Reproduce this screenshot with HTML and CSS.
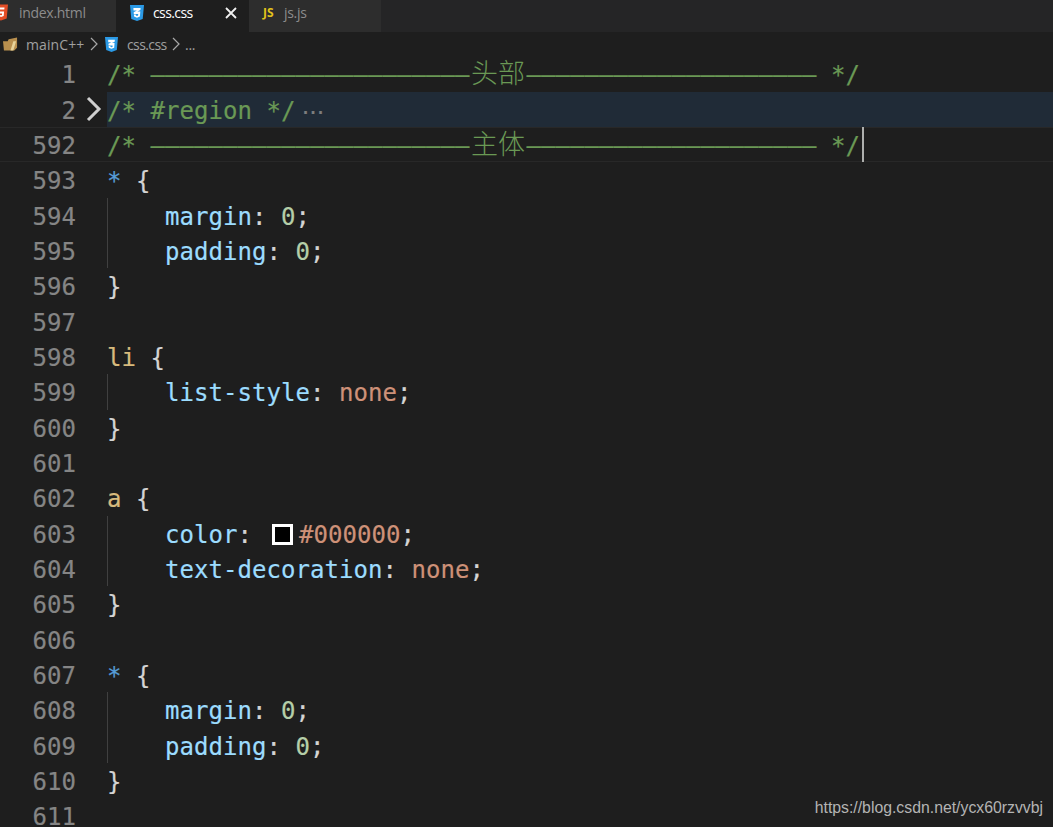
FILE: index.html
```html
<!DOCTYPE html>
<html lang="zh">
<head>
<meta charset="utf-8">
<title>css.css</title>
<link rel="stylesheet" href="styles.css">
</head>
<body>
<div class="window">
  <div class="tabs">
    <div class="tab tab-html">
      <svg class="icon-html" viewBox="0 0 14 16"><path fill="#e44d26" d="M0 0h14l-1.3 14L7 16l-5.7-2z"/><path fill="#fff" d="M3.5 3h7l-.2 2H5.700l.1 2h4.300l-.4 4.500L7 12.400l-2.700-.9-.2-2h1.800l.1 1 1 .3 1-.3.100-1.500H3.900z"/></svg>
      <span class="tab-label">index.html</span>
    </div>
    <div class="tab tab-active">
      <svg class="icon-css" viewBox="0 0 14 16"><path fill="#2b9ae6" d="M0 0h14l-1.300 14L7 16l-5.700-2z"/><path fill="#fff" d="M3.400 3h7.200l-.2 2-3 1.500h2.900l-.4 5L7 12.700l-2.900-1.100-.2-2h1.900l.1 1 1.100.4 1.100-.4.100-1.600H3.800l-.1-1.800 3.200-1.700H3.500z"/></svg>
      <span class="tab-label tab-label-active">css.css</span>
      <svg class="icon-close" viewBox="0 0 12 12"><path d="M1 1l10 10M11 1L1 11"/></svg>
    </div>
    <div class="tab tab-js">
      <span class="js-badge">JS</span>
      <span class="tab-label">js.js</span>
    </div>
  </div>
  <div class="crumbs">
    <svg class="icon-folder" viewBox="0 0 16 15"><path fill="#b88f4e" d="M0 4h5l1-2 9-2v11l-3 3H1z"/><path fill="#e8d39a" d="M8 14l3-10h3l-3 10z"/></svg>
    <span class="crumb-text crumb-root">mainC++</span>
    <svg class="icon-sep" viewBox="0 0 8 14"><path d="M1 1l6 6-6 6"/></svg>
    <svg class="icon-css-small" viewBox="0 0 14 16"><path fill="#2b9ae6" d="M0 0h14l-1.300 14L7 16l-5.700-2z"/><path fill="#fff" d="M3.400 3h7.200l-.2 2-3 1.500h2.900l-.4 5L7 12.700l-2.900-1.100-.2-2h1.900l.1 1 1.100.4 1.100-.4.100-1.600H3.800l-.1-1.800 3.200-1.700H3.500z"/></svg>
    <span class="crumb-text crumb-file">css.css</span>
    <svg class="icon-sep" viewBox="0 0 8 14"><path d="M1 1l6 6-6 6"/></svg>
    <span class="crumb-text crumb-more">...</span>
  </div>
  <div class="editor">
    <div class="line"><span class="num">1</span><span class="fold"></span><span class="code c-com">/* ——————————————————————<span class="cjk">头部</span>———————————————————— */</span></div>
    <div class="line"><span class="num">2</span><span class="fold"><svg class="icon-fold" viewBox="0 0 16 26"><path d="M2 2l11 11L2 24"/></svg></span><span class="code code-folded c-com">/* #region */<span class="dots">···</span></span></div>
    <div class="line line-current"><span class="num">592</span><span class="fold"></span><span class="code c-com">/* ——————————————————————<span class="cjk">主体</span>———————————————————— */<span class="caret"></span></span></div>
    <div class="line"><span class="num">593</span><span class="fold"></span><span class="code"><span class="c-sel">*</span> {</span></div>
    <div class="line"><span class="num">594</span><span class="fold"></span><span class="code guide">    <span class="c-prop">margin</span>: <span class="c-num">0</span>;</span></div>
    <div class="line"><span class="num">595</span><span class="fold"></span><span class="code guide">    <span class="c-prop">padding</span>: <span class="c-num">0</span>;</span></div>
    <div class="line"><span class="num">596</span><span class="fold"></span><span class="code">}</span></div>
    <div class="line"><span class="num">597</span><span class="fold"></span><span class="code"></span></div>
    <div class="line"><span class="num">598</span><span class="fold"></span><span class="code"><span class="c-tag">li</span> {</span></div>
    <div class="line"><span class="num">599</span><span class="fold"></span><span class="code guide">    <span class="c-prop">list-style</span>: <span class="c-val">none</span>;</span></div>
    <div class="line"><span class="num">600</span><span class="fold"></span><span class="code">}</span></div>
    <div class="line"><span class="num">601</span><span class="fold"></span><span class="code"></span></div>
    <div class="line"><span class="num">602</span><span class="fold"></span><span class="code"><span class="c-tag">a</span> {</span></div>
    <div class="line"><span class="num">603</span><span class="fold"></span><span class="code guide">    <span class="c-prop">color</span>: <span class="swatch"></span><span class="c-val">#000000</span>;</span></div>
    <div class="line"><span class="num">604</span><span class="fold"></span><span class="code guide">    <span class="c-prop">text-decoration</span>: <span class="c-val">none</span>;</span></div>
    <div class="line"><span class="num">605</span><span class="fold"></span><span class="code">}</span></div>
    <div class="line"><span class="num">606</span><span class="fold"></span><span class="code"></span></div>
    <div class="line"><span class="num">607</span><span class="fold"></span><span class="code"><span class="c-sel">*</span> {</span></div>
    <div class="line"><span class="num">608</span><span class="fold"></span><span class="code guide">    <span class="c-prop">margin</span>: <span class="c-num">0</span>;</span></div>
    <div class="line"><span class="num">609</span><span class="fold"></span><span class="code guide">    <span class="c-prop">padding</span>: <span class="c-num">0</span>;</span></div>
    <div class="line"><span class="num">610</span><span class="fold"></span><span class="code">}</span></div>
    <div class="line"><span class="num">611</span><span class="fold"></span><span class="code"></span></div>
  </div>
  <div class="watermark">https://blog.csdn.net/ycx60rzvvbj</div>
</div>
</body>
</html>
```
FILE: styles.css
```css
* { box-sizing: border-box; }
html, body { margin: 0; padding: 0; height: 100%; background: #1e1e1e; overflow: hidden; }
.window { position: relative; width: 1053px; height: 827px; overflow: hidden; background: #1e1e1e; }

.tabs { display: flex; height: 32px; background: #252526; font-family: "Open Sans", "Noto Sans", sans-serif; font-size: 14px; letter-spacing: -0.3px; }
.tab { display: flex; align-items: center; height: 32px; overflow: hidden; padding-bottom: 7px; color: #8c8c8c; }
.tab-html { width: 116px; background: #2d2d2d; }
.tab-active { width: 133px; padding-left: 14px; background: #1e1e1e; color: #fff; }
.tab-js { width: 132px; padding-left: 14px; background: #2d2d2d; }
.tab-label-active { width: 41px; letter-spacing: -0.6px; }
.icon-html { width: 14px; height: 17px; margin-left: -6px; margin-right: 11px; flex: none; }
.icon-css { width: 14px; height: 16px; margin-right: 9px; flex: none; }
.icon-close { width: 12px; height: 12px; margin-left: 31px; flex: none; fill: none; stroke: #f0f0f0; stroke-width: 1.8; }
.js-badge { width: 21px; color: #e2c21b; font-weight: 700; font-size: 12px; letter-spacing: 0; }

.crumbs { display: flex; align-items: center; height: 24.33px; padding-left: 3px; color: #a0a0a0; font-family: "Open Sans", "Noto Sans", sans-serif; font-size: 14px; letter-spacing: -0.3px; }
.icon-folder { width: 15px; height: 15px; margin-right: 8px; flex: none; }
.icon-sep { width: 8px; height: 14px; margin: 0 5px; flex: none; fill: none; stroke: #a8a8a8; stroke-width: 1.2; }
.icon-css-small { width: 13px; height: 15px; margin: 0 9px 0 2px; flex: none; }
.crumb-root { width: 59px; letter-spacing: 0.1px; }
.crumb-file { width: 40px; letter-spacing: -0.6px; }

.editor { font-family: "DejaVu Sans Mono", "Liberation Mono", "Noto Sans CJK SC", monospace; font-size: 24px; letter-spacing: 0.05px; color: #d4d4d4; -webkit-text-stroke: 0.2px; }
.line { display: flex; height: 35.33px; line-height: 39px; white-space: pre; }
.num { width: 76px; flex: none; text-align: right; color: #858585; }
.fold { display: flex; align-items: center; width: 31px; padding-left: 10px; flex: none; }
.code { flex: 1; position: relative; height: 100%; }
.guide { box-shadow: inset 1px 0 0 #404040; }
.code-folded { background: #202b37; }
.line-current { box-shadow: inset 0 1px 0 #282828, inset 0 -1px 0 #282828; }
.icon-fold { width: 16px; height: 26px; fill: none; stroke: #d0d0d0; stroke-width: 3; }
.dots { margin-left: 4px; color: #7e7e7e; font-size: 20px; letter-spacing: -4.500px; }
.cjk { margin: 0 1.5px; font-family: "Noto Sans CJK SC", sans-serif; font-size: 27px; font-weight: 300; line-height: 0; -webkit-text-stroke: 0; }
.caret { position: absolute; top: 0; width: 2px; height: 100%; background: #aeafad; margin-left: 2px; }
.swatch { display: inline-block; vertical-align: -2px; width: 21px; height: 21px; margin: 0 6px 0 5.500px; background: #000; border: 3px solid #fff; }

.c-com { color: #6a9955; }
.c-sel { color: #569cd6; }
.c-tag { color: #d7ba7d; }
.c-prop { color: #9cdcfe; }
.c-num { color: #b5cea8; }
.c-val { color: #ce9178; }

.watermark { position: absolute; right: 10px; top: 799px; color: #b4b4b4; font-family: "Liberation Sans", Arial, sans-serif; font-size: 15.8px; }
```
